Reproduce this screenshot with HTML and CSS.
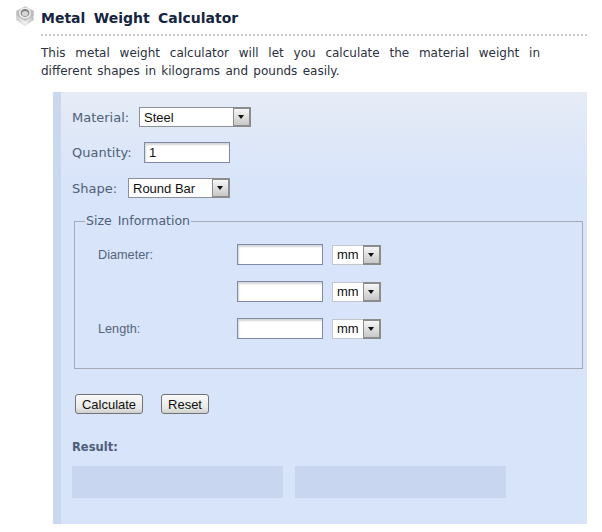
FILE: index.html
```html
<!DOCTYPE html>
<html lang="en">
<head>
<meta charset="utf-8">
<title>Metal Weight Calculator</title>
<link rel="stylesheet" href="styles.css">
</head>
<body>
<main class="page">
  <header class="title-row">
    <svg class="nut" viewBox="0 0 18 20" width="18" height="20" aria-hidden="true">
      <defs>
        <linearGradient id="side" x1="0" y1="0" x2="1" y2="0">
          <stop offset="0" stop-color="#cfcfcf"/><stop offset=".5" stop-color="#f2f2f2"/><stop offset="1" stop-color="#bdbdbd"/>
        </linearGradient>
      </defs>
      <path d="M.5 5 9 .5 17.500 5v9L9 19.500.5 14z" fill="url(#side)" stroke="#d4d4d4" stroke-width=".6"/>
      <path d="M.5 5 9 .5 17.500 5v4.500L9 15 .5 9.500z" fill="#bcbcbc"/>
      <ellipse cx="9" cy="7" rx="6" ry="5.500" fill="#efefef"/>
      <ellipse cx="9" cy="7" rx="4.400" ry="3.900" fill="#7d7d7d"/>
      <ellipse cx="9" cy="7.600" rx="3.200" ry="2.700" fill="#d6d6d6"/>
    </svg>
    <h1 class="title">Metal Weight Calculator</h1>
  </header>
  <p class="intro">This metal weight calculator will let you calculate the material weight in different shapes in kilograms and pounds easily.</p>
  <form class="panel">
    <div class="field field-material">
      <label class="label" for="material">Material:</label>
      <span class="select-wrap select-material">
        <select id="material" class="select"><option>Steel</option></select>
        <span class="arrow"></span>
      </span>
    </div>
    <div class="field field-quantity">
      <label class="label" for="quantity">Quantity:</label>
      <input id="quantity" class="text-input quantity" type="text" value="1">
    </div>
    <div class="field field-shape">
      <label class="label" for="shape">Shape:</label>
      <span class="select-wrap select-shape">
        <select id="shape" class="select"><option>Round Bar</option></select>
        <span class="arrow"></span>
      </span>
    </div>
    <fieldset class="size-box">
      <legend class="legend">Size Information</legend>
      <div class="size-row">
        <label class="size-label">Diameter:</label>
        <input class="text-input size-input" type="text">
        <span class="select-wrap select-unit"><select class="select"><option>mm</option></select><span class="arrow"></span></span>
      </div>
      <div class="size-row">
        <label class="size-label"></label>
        <input class="text-input size-input" type="text">
        <span class="select-wrap select-unit"><select class="select"><option>mm</option></select><span class="arrow"></span></span>
      </div>
      <div class="size-row">
        <label class="size-label">Length:</label>
        <input class="text-input size-input" type="text">
        <span class="select-wrap select-unit"><select class="select"><option>mm</option></select><span class="arrow"></span></span>
      </div>
    </fieldset>
    <div class="actions">
      <button class="btn btn-calc" type="button">Calculate</button>
      <button class="btn btn-reset" type="button">Reset</button>
    </div>
    <h2 class="result-title">Result:</h2>
    <div class="results">
      <div class="result-box"></div>
      <div class="result-box"></div>
    </div>
  </form>
</main>
</body>
</html>
```
FILE: styles.css
```css
* { box-sizing: border-box; }
html, body { margin: 0; padding: 0; background: #fff; }
body { width: 602px; height: 532px; overflow: hidden; font-family: "DejaVu Sans", Verdana, sans-serif; }
.page { padding: 6px 15px 0 16px; }
.title-row { display: flex; align-items: flex-start; height: 28px; }
.nut { display: block; flex: none; }
.title { margin: 3px 0 0 7px; font-size: 14px; line-height: 18px; font-weight: bold; color: #16253f; word-spacing: 3.500px; }
.intro { margin: 0 0 0 25px; padding: 8px 47px 0 0; border-top: 2px dotted #c8c8c8; font-size: 12px; line-height: 18px; height: 58px; color: #2c3040; text-align: justify; word-spacing: 1.500px; }
.panel { margin-left: 37px; height: 432px; padding: 15px 4px 0 11px; background: linear-gradient(#e6ecf6 0, #d8e4fa 90px); border-left: 8px solid #c9d7ef; display: block; }
.field { display: flex; align-items: center; margin-bottom: 15px; }
.label { font-size: 13px; color: #4f5f78; word-spacing: 1px; }
.field-material .label { width: 67px; }
.field-quantity .label { width: 72px; }
.field-shape .label { width: 56px; }
.select-wrap { position: relative; display: block; height: 20px; flex: none; }
.select { appearance: none; -webkit-appearance: none; display: block; width: 100%; height: 100%; padding: 0 0 0 4px; border: 1px solid #8e9098; border-radius: 0; background: #fff; color: #111; font-family: "Liberation Sans", Arial, sans-serif; font-size: 13px; }
.select-material { width: 112px; }
.select-shape { width: 102px; }
.select-unit { width: 49px; margin-left: 9px; }
.select-unit .select { border-color: #c3c6cc; }
.arrow { position: absolute; right: 0; top: 0; bottom: 0; width: 18px; background: linear-gradient(#f6f6f6, #c8c8c8); border: 2px solid #8c8c8c; border-left-width: 1px; pointer-events: none; }
.arrow::after { content: ""; position: absolute; left: 4px; top: 6px; border: 3.500px solid transparent; border-top: 4px solid #111; border-bottom: 0; }
.text-input { display: block; height: 21px; padding: 0 4px; border: 1px solid #7f8aa8; border-radius: 0; background: #fff; box-shadow: inset 1px 2px 2px #d5d5d5; color: #111; font-family: "Liberation Sans", Arial, sans-serif; font-size: 13px; }
.quantity { width: 86px; }
.size-box { margin: 0 0 0 2px; padding: 0 0 0 23px; width: 509px; height: 156px; border: 1px solid #a4a9b4; }
.legend { margin-left: -13px; padding: 0 1px; font-size: 12.500px; line-height: 16px; color: #4f5f78; word-spacing: 2px; }
.size-row { display: flex; align-items: center; height: 21px; margin-bottom: 16px; }
.size-row:first-of-type { margin-top: 15px; }
.size-label { width: 139px; flex: none; font-family: "Liberation Sans", Arial, sans-serif; font-size: 12.700px; color: #56657c; }
.size-input { width: 86px; flex: none; }
.actions { display: flex; margin: 25px 0 0 3px; height: 20px; }
.btn { height: 20px; padding: 0; border: 1px solid #70737a; border-radius: 3px; background: linear-gradient(#fafafa, #e9e9e6 70%, #cfcfcb); font-family: "Liberation Sans", Arial, sans-serif; font-size: 13px; color: #111; }
.btn-calc { width: 68px; }
.btn-reset { width: 48px; margin-left: 18px; }
.result-title { margin: 25px 0 0; font-size: 11.500px; line-height: 16px; font-weight: bold; color: #4d5d7a; }
.results { display: flex; gap: 12px; margin-top: 11px; }
.result-box { width: 211px; height: 32px; background: #c8d7ef; }
```
